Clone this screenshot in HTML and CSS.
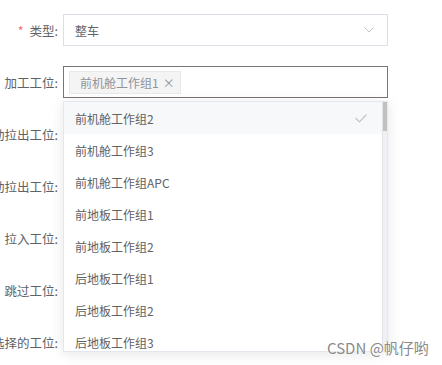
FILE: index.html
```html
<!DOCTYPE html>
<html lang="zh-CN">
<head>
<meta charset="UTF-8">
<meta name="viewport" content="width=device-width, initial-scale=1.0">
<title>工位选择</title>
<link rel="stylesheet" href="styles.css">
</head>
<body>
<form class="form">
  <div class="form-item">
    <label class="label"><span class="required">*</span>类型:</label>
    <div class="select">
      <span class="value">整车</span>
      <svg class="arrow" width="10" height="6" viewBox="0 0 10 6"><path d="M0.5 0.5 L5 5 L9.5 0.5" fill="none" stroke="#c0c4cc" stroke-width="1"/></svg>
    </div>
  </div>
  <div class="form-item">
    <label class="label">加工工位:</label>
    <div class="select select-active">
      <span class="tag">前机舱工作组1<span class="tag-close">×</span></span>
    </div>
  </div>
  <div class="form-item">
    <label class="label">自动拉出工位:</label>
    <div class="select select-hidden"></div>
  </div>
  <div class="form-item">
    <label class="label">手动拉出工位:</label>
    <div class="select select-hidden"></div>
  </div>
  <div class="form-item">
    <label class="label">拉入工位:</label>
    <div class="select select-hidden"></div>
  </div>
  <div class="form-item">
    <label class="label">跳过工位:</label>
    <div class="select select-hidden"></div>
  </div>
  <div class="form-item">
    <label class="label">可选择的工位:</label>
    <div class="select select-hidden"></div>
  </div>
</form>

<div class="dropdown">
  <ul class="options">
    <li class="option hover">前机舱工作组2
      <svg class="check" width="12" height="9" viewBox="0 0 12 9"><path d="M0.5 4 L4.5 8 L11.5 0.5" fill="none" stroke="#c0c4cc" stroke-width="1.2"/></svg>
    </li>
    <li class="option">前机舱工作组3</li>
    <li class="option">前机舱工作组APC</li>
    <li class="option">前地板工作组1</li>
    <li class="option">前地板工作组2</li>
    <li class="option">后地板工作组1</li>
    <li class="option">后地板工作组2</li>
    <li class="option">后地板工作组3</li>
  </ul>
  <div class="scrollbar"><div class="thumb"></div></div>
</div>

<div class="watermark">CSDN @帆仔哟</div>
</body>
</html>
```

FILE: styles.css
```css
body {
  margin: 0;
  background: #fff;
  font-family: "Noto Sans CJK SC", "Noto Sans", sans-serif;
  font-size: 12px;
  color: #606266;
  overflow: hidden;
}
.form {
  display: flex;
  flex-direction: column;
  gap: 20px;
  padding-top: 14px;
}
.form-item {
  display: flex;
  height: 32px;
  align-items: center;
}
.label {
  width: 63px;
  flex-shrink: 0;
  display: flex;
  justify-content: flex-end;
  white-space: nowrap;
  padding-right: 5px;
  box-sizing: border-box;
  font-size: 12.5px;
}
.required {
  color: #f56c6c;
  margin-right: 6px;
}
.select {
  width: 325px;
  height: 32px;
  box-sizing: border-box;
  border: 1px solid #dcdfe6;
  display: flex;
  align-items: center;
  padding: 0 12px 0 11px;
}
.select .value {
  flex: 1;
}
.arrow {
  margin-right: 1px;
}
.select-active {
  border-color: #787478;
  padding-left: 5px;
}
.select-hidden {
  border-color: #fff;
}
.tag {
  display: flex;
  align-items: center;
  height: 23px;
  box-sizing: border-box;
  padding: 0 5px 0 10px;
  background: #f4f4f5;
  border: 1px solid #e9e9eb;
  color: #909399;
  font-size: 12px;
}
.tag-close {
  margin-left: 4px;
  font-size: 12px;
}
.dropdown {
  position: absolute;
  left: 63px;
  top: 101px;
  width: 325px;
  height: 251px;
  background: #fff;
  border: 1px solid #e4e7ed;
  box-sizing: border-box;
  box-shadow: 0 2px 12px 0 rgba(0, 0, 0, 0.1);
  display: flex;
  overflow: hidden;
}
.options {
  list-style: none;
  margin: 0;
  padding: 0;
  flex: 1;
}
.option {
  height: 32px;
  display: flex;
  align-items: center;
  justify-content: space-between;
  padding: 0 15px 0 11px;
}
.option.hover {
  background: #f6f8f9;
}
.scrollbar {
  width: 4px;
  background: #eef0f4;
  border-left: 1px solid #e2e4e8;
}
.thumb {
  height: 29px;
  background: #c1c1c1;
}
.watermark {
  position: absolute;
  left: 327px;
  top: 337px;
  font-size: 15px;
  color: #8a8a8a;
  text-shadow: 0 0 2px #fff, 0 0 2px #fff;
  white-space: nowrap;
}
```
